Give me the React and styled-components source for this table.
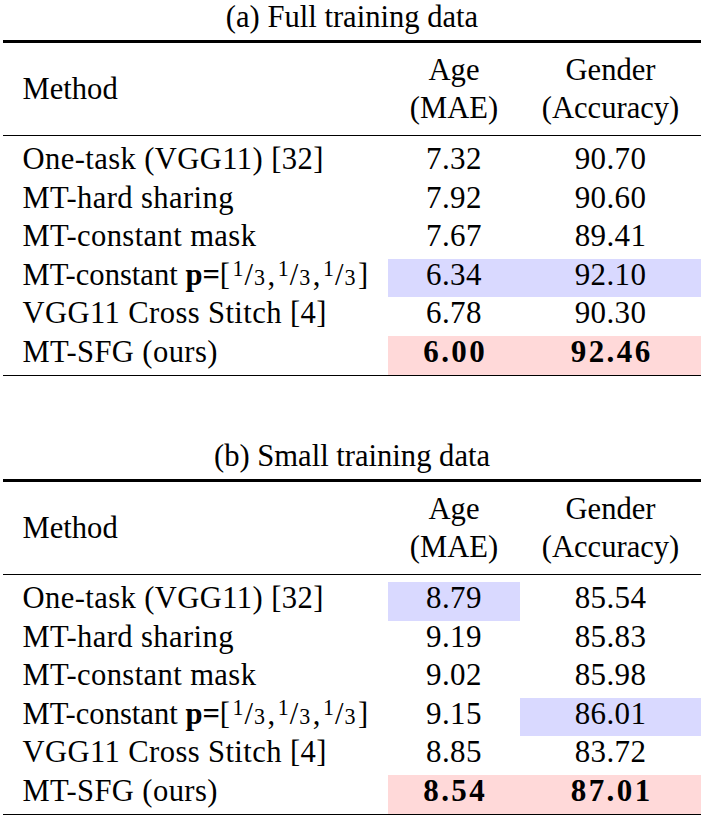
import React from "react";
import styled, { createGlobalStyle } from "styled-components";

const GlobalStyle = createGlobalStyle`
  html, body {
    margin: 0;
    padding: 0;
    background: #fff;
  }
  body {
    font-family: "Liberation Serif", "Times New Roman", serif;
    color: #000;
  }
`;

const Page = styled.div`
  width: 703px;
  display: flex;
  flex-direction: column;
  gap: 63px;
`;

const Block = styled.section`
  display: flex;
  flex-direction: column;
  margin-left: 3px;
  width: 698px;
`;

const Caption = styled.div`
  font-size: 30.6px;
  line-height: 34px;
  text-align: center;
  margin-bottom: 6px;
`;

const Rule = styled.div`
  height: ${(p) => (p.$thick ? "3px" : "1.5px")};
  background: #000;
`;

const Grid = styled.div`
  display: grid;
  grid-template-columns: 385px 132px 181px;
`;

const HeadGrid = styled(Grid)`
  height: 91.5px;
  align-items: center;
  font-size: 30.6px;
`;

const HeadLabel = styled.div`
  line-height: 38px;
  padding-left: ${(p) => (p.$left ? "19.5px" : "0")};
  text-align: ${(p) => (p.$left ? "left" : "center")};
`;

const Body = styled(Grid)`
  padding-top: 7px;
`;

const colors = {
  blue: "rgb(217, 217, 255)",
  pink: "rgb(255, 217, 217)",
};

const Cell = styled.div`
  height: 38.6px;
  box-sizing: border-box;
  line-height: 32px;
  font-size: ${(p) => (p.$num ? "31px" : "30.6px")};
  font-weight: ${(p) => (p.$bold ? 700 : 400)};
  letter-spacing: ${(p) => (p.$bold ? "2.4px" : "0.4px")};
  text-indent: ${(p) => (p.$bold ? "2.4px" : "0")};
  white-space: nowrap;
  padding-left: ${(p) => (p.$num ? "0" : "19.5px")};
  text-align: ${(p) => (p.$num ? "center" : "left")};
  background: ${(p) => (p.$bg ? colors[p.$bg] : "transparent")};
`;

const Method = styled.span`
  letter-spacing: 0;
`;

const BoldP = styled.b`
  font-weight: 700;
`;

const Frac = styled.span`
  margin: 0 2.5px;
  line-height: 0;
`;

const Small = styled.span`
  font-size: 0.72em;
  line-height: 0;
  vertical-align: ${(p) => (p.$up ? "0.42em" : "baseline")};
`;

const Slash = styled.span`
  margin: 0 1px;
`;

const Third = () => (
  <Frac>
    <Small $up>1</Small>
    <Slash>/</Slash>
    <Small>3</Small>
  </Frac>
);

const ConstantP = () => (
  <Method>
    MT-constant <BoldP>p=</BoldP>[<Third />,<Third />,<Third />]
  </Method>
);

const tables = [
  {
    caption: "(a) Full training data",
    rows: [
      { name: "One-task (VGG11) [32]", age: "7.32", gender: "90.70" },
      { name: "MT-hard sharing", age: "7.92", gender: "90.60" },
      { name: "MT-constant mask", age: "7.67", gender: "89.41" },
      { name: <ConstantP />, age: "6.34", gender: "92.10", ageBg: "blue", genderBg: "blue" },
      { name: "VGG11 Cross Stitch [4]", age: "6.78", gender: "90.30" },
      { name: "MT-SFG (ours)", age: "6.00", gender: "92.46", ageBg: "pink", genderBg: "pink", bold: true },
    ],
  },
  {
    caption: "(b) Small training data",
    rows: [
      { name: "One-task (VGG11) [32]", age: "8.79", gender: "85.54", ageBg: "blue" },
      { name: "MT-hard sharing", age: "9.19", gender: "85.83" },
      { name: "MT-constant mask", age: "9.02", gender: "85.98" },
      { name: <ConstantP />, age: "9.15", gender: "86.01", genderBg: "blue" },
      { name: "VGG11 Cross Stitch [4]", age: "8.85", gender: "83.72" },
      { name: "MT-SFG (ours)", age: "8.54", gender: "87.01", ageBg: "pink", genderBg: "pink", bold: true },
    ],
  },
];

const ResultsTable = ({ caption, rows }) => (
  <Block>
    <Caption>{caption}</Caption>
    <Rule $thick />
    <HeadGrid>
      <HeadLabel $left>Method</HeadLabel>
      <HeadLabel>
        Age
        <br />
        (MAE)
      </HeadLabel>
      <HeadLabel>
        Gender
        <br />
        (Accuracy)
      </HeadLabel>
    </HeadGrid>
    <Rule />
    <Body>
      {rows.map((r, i) => (
        <React.Fragment key={i}>
          <Cell>{r.name}</Cell>
          <Cell $num $bold={r.bold} $bg={r.ageBg}>
            {r.age}
          </Cell>
          <Cell $num $bold={r.bold} $bg={r.genderBg}>
            {r.gender}
          </Cell>
        </React.Fragment>
      ))}
    </Body>
    <Rule />
  </Block>
);

export default function App() {
  return (
    <Page>
      <GlobalStyle />
      {tables.map((t) => (
        <ResultsTable key={t.caption} caption={t.caption} rows={t.rows} />
      ))}
    </Page>
  );
}
